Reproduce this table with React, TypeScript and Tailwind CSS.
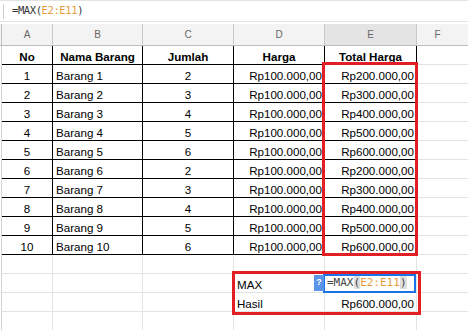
import React from "react";

type Row = [string, string, string, string, string];

const data: Row[] = [
  ["1", "Barang 1", "2", "Rp100.000,00", "Rp200.000,00"],
  ["2", "Barang 2", "3", "Rp100.000,00", "Rp300.000,00"],
  ["3", "Barang 3", "4", "Rp100.000,00", "Rp400.000,00"],
  ["4", "Barang 4", "5", "Rp100.000,00", "Rp500.000,00"],
  ["5", "Barang 5", "6", "Rp100.000,00", "Rp600.000,00"],
  ["6", "Barang 6", "2", "Rp100.000,00", "Rp200.000,00"],
  ["7", "Barang 7", "3", "Rp100.000,00", "Rp300.000,00"],
  ["8", "Barang 8", "4", "Rp100.000,00", "Rp400.000,00"],
  ["9", "Barang 9", "5", "Rp100.000,00", "Rp500.000,00"],
  ["10", "Barang 10", "6", "Rp100.000,00", "Rp600.000,00"],
];

const widths = ["w-[51px]", "w-[90px]", "w-[91px]", "w-[91px]", "w-[92px]"];
const aligns = ["justify-center", "justify-start pl-[3px]", "justify-center", "justify-end pr-[2px]", "justify-end pr-[2px]"];

function Stub({ header }: { header?: boolean }) {
  return (
    <div
      className={
        header
          ? "w-[2px] shrink-0 h-full bg-[#f3f3f3] border-r border-[#c0c0c0]"
          : "w-[2px] shrink-0 h-full border-r border-[#d4d4d4]"
      }
    />
  );
}

function TableRow({ row, bold }: { row: Row; bold?: boolean }) {
  return (
    <div className="flex h-[19px]">
      <Stub />
      {row.map((v, i) => (
        <div
          key={i}
          className={
            "h-[19px] shrink-0 flex items-center pt-[4px] border-r border-b border-black overflow-hidden whitespace-nowrap " +
            widths[i] +
            " " +
            (bold ? "justify-center font-bold" : aligns[i])
          }
        >
          {v}
        </div>
      ))}
      <div className="h-[19px] flex-1 border-b border-[#e2e3e3]" />
    </div>
  );
}

function BlankRow({ d, e }: { d?: React.ReactNode; e?: React.ReactNode }) {
  return (
    <div className="flex h-[19px]">
      <Stub />
      <div className="h-[19px] w-[51px] shrink-0 border-r border-b border-[#e2e3e3]" />
      <div className="h-[19px] w-[90px] shrink-0 border-r border-b border-[#e2e3e3]" />
      <div className="h-[19px] w-[91px] shrink-0 border-r border-b border-[#e2e3e3]" />
      <div className="h-[19px] w-[91px] shrink-0 border-r border-b border-[#e2e3e3] flex items-center pt-[4px] pl-[3px] whitespace-nowrap">
        {d}
      </div>
      <div className="h-[19px] w-[92px] shrink-0 border-r border-b border-[#e2e3e3] flex items-center whitespace-nowrap overflow-hidden">
        {e}
      </div>
      <div className="h-[19px] flex-1 border-b border-[#e2e3e3]" />
    </div>
  );
}

export default function App() {
  const mono = { fontFamily: '"DejaVu Sans Mono", "Liberation Mono", monospace' };
  return (
    <div
      className="relative w-[468px] h-[330px] overflow-hidden bg-white text-black text-[11.6px]"
      style={{ fontFamily: '"Liberation Sans", Arial, sans-serif' }}
    >
      {/* formula bar */}
      <div className="h-[22px] border-t border-b border-[#e3e3e3] flex items-center">
        <div className="ml-[3px] w-px h-[15px] bg-[#d0d0d0]" />
        <div className="ml-[8px] text-[10.5px] text-[#333] tracking-[-0.4px]" style={mono}>
          =MAX(<span className="text-[#e69b3c]">E2:E11</span>)
        </div>
      </div>
      <div className="h-[2px]" />

      {/* column letters */}
      <div className="flex h-[22px] border-b border-[#bdbdbd] text-[10px] text-[#666]">
        <Stub header />
        {["A", "B", "C", "D"].map((l, i) => (
          <div
            key={l}
            className={"h-full shrink-0 flex items-center justify-center bg-[#f3f3f3] border-r border-[#c8c8c8] " + widths[i]}
          >
            {l}
          </div>
        ))}
        <div className="h-full w-[92px] shrink-0 flex items-center justify-center bg-[#e4e4e4] border-r border-[#c8c8c8]">E</div>
        <div className="h-full flex-1 flex items-center justify-center bg-[#f3f3f3] pr-[10px]">F</div>
      </div>

      <TableRow row={["No", "Nama Barang", "Jumlah", "Harga", "Total Harga"]} bold />
      {data.map((r, i) => (
        <TableRow key={i} row={r} />
      ))}
      <BlankRow />
      <BlankRow
        d="MAX"
        e={
          <span className="pl-[2px] pt-[1px] text-[11px] text-[#444]" style={mono}>
            =MAX<span className="bg-[#dedede]">(</span>
            <span className="text-[#e69b3c]">E2:E11</span>
            <span className="bg-[#dedede]">)</span>
          </span>
        }
      />
      <BlankRow
        d="Hasil"
        e={<span className="w-full text-right pr-[2px] pt-[4px]">Rp600.000,00</span>}
      />
      <BlankRow />

      {/* overlays */}
      <div className="absolute left-[322px] top-[62px] w-[96px] h-[194px] border-[3px] border-[#e31e24]" />
      <div className="absolute left-[232px] top-[271px] w-[189px] h-[44px] border-[3px] border-[#e31e24]" />
      <div className="absolute left-[323px] top-[274px] w-[93px] h-[19px] border-2 border-[#1a73e8]" />
      <div className="absolute left-[314px] top-[275px] w-[10px] h-[16px] bg-[#5b95e8] text-white text-[9px] font-bold flex items-center justify-center">
        ?
      </div>
    </div>
  );
}
